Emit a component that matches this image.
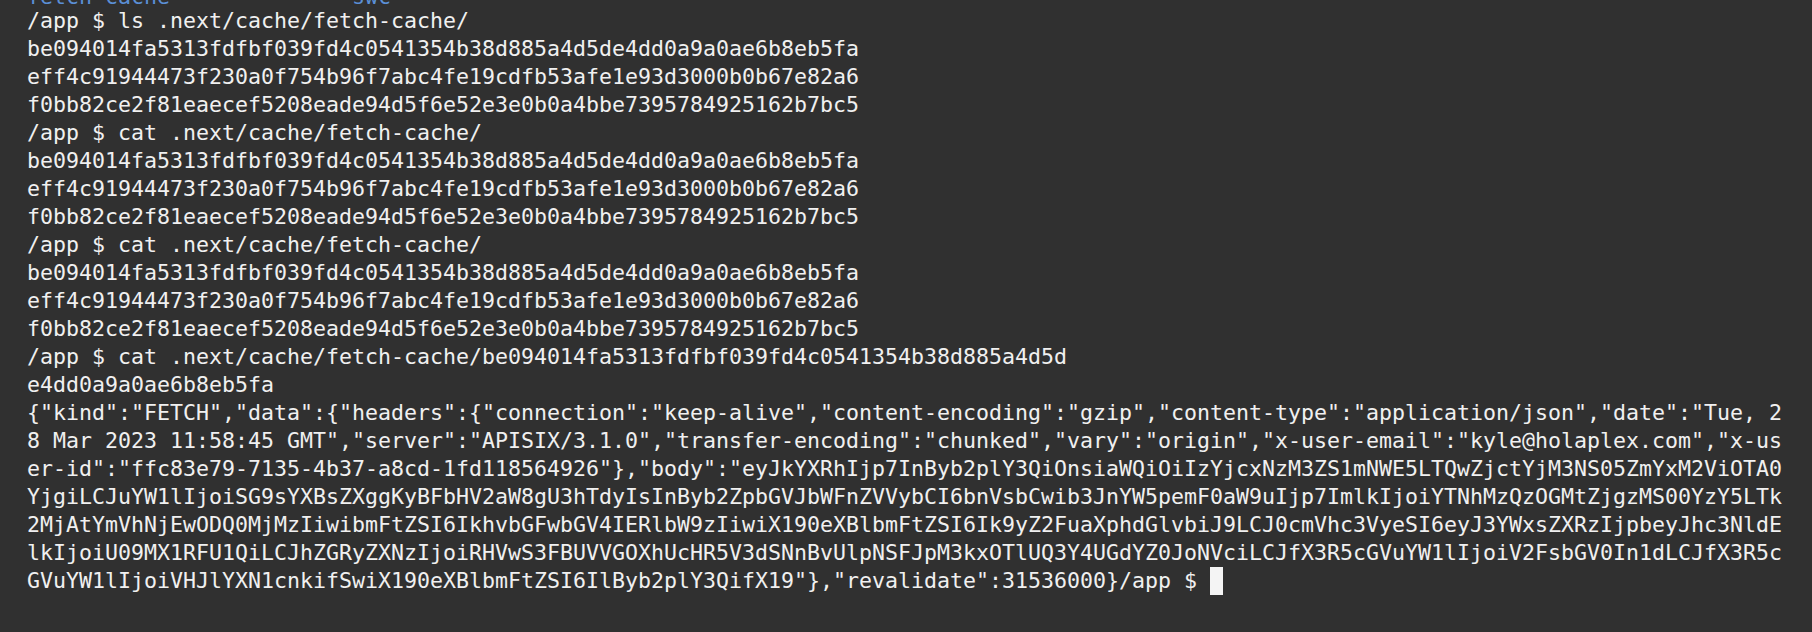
const hashes = [
  "be094014fa5313fdfbf039fd4c0541354b38d885a4d5de4dd0a9a0ae6b8eb5fa",
  "eff4c91944473f230a0f754b96f7abc4fe19cdfb53afe1e93d3000b0b67e82a6",
  "f0bb82ce2f81eaecef5208eade94d5f6e52e3e0b0a4bbe7395784925162b7bc5",
];

const lines: string[] = [
  "/app $ ls .next/cache/fetch-cache/",
  ...hashes,
  "/app $ cat .next/cache/fetch-cache/",
  ...hashes,
  "/app $ cat .next/cache/fetch-cache/",
  ...hashes,
  "/app $ cat .next/cache/fetch-cache/be094014fa5313fdfbf039fd4c0541354b38d885a4d5d",
  "e4dd0a9a0ae6b8eb5fa",
  '{"kind":"FETCH","data":{"headers":{"connection":"keep-alive","content-encoding":"gzip","content-type":"application/json","date":"Tue, 2',
  '8 Mar 2023 11:58:45 GMT","server":"APISIX/3.1.0","transfer-encoding":"chunked","vary":"origin","x-user-email":"kyle@holaplex.com","x-us',
  'er-id":"ffc83e79-7135-4b37-a8cd-1fd118564926"},"body":"eyJkYXRhIjp7InByb2plY3QiOnsiaWQiOiIzYjcxNzM3ZS1mNWE5LTQwZjctYjM3NS05ZmYxM2ViOTA0',
  "YjgiLCJuYW1lIjoiSG9sYXBsZXggKyBFbHV2aW8gU3hTdyIsInByb2ZpbGVJbWFnZVVybCI6bnVsbCwib3JnYW5pemF0aW9uIjp7ImlkIjoiYTNhMzQzOGMtZjgzMS00YzY5LTk",
  "2MjAtYmVhNjEwODQ0MjMzIiwibmFtZSI6IkhvbGFwbGV4IERlbW9zIiwiX190eXBlbmFtZSI6Ik9yZ2FuaXphdGlvbiJ9LCJ0cmVhc3VyeSI6eyJ3YWxsZXRzIjpbeyJhc3NldE",
  "lkIjoiU09MX1RFU1QiLCJhZGRyZXNzIjoiRHVwS3FBUVVGOXhUcHR5V3dSNnBvUlpNSFJpM3kxOTlUQ3Y4UGdYZ0JoNVciLCJfX3R5cGVuYW1lIjoiV2FsbGV0In1dLCJfX3R5c",
];

const lastLine =
  'GVuYW1lIjoiVHJlYXN1cnkifSwiX190eXBlbmFtZSI6IlByb2plY3QifX19"},"revalidate":31536000}/app $ ';

export default function App() {
  return (
    <div
      className="w-[1812px] h-[632px] overflow-hidden bg-[#303030] text-[#f0f0f0] pl-[27px] text-[21.6px] leading-[28px]"
      style={{ fontFamily: '"DejaVu Sans Mono", "Liberation Mono", monospace' }}
    >
      {/* ls output scrolled off the top, only its lower edge shows */}
      <div className="-mt-[17px] h-[24px] whitespace-pre text-[#5b8fd6]">
        {"fetch-cache              swc"}
      </div>

      {lines.map((line, i) => (
        <div key={i} className="h-[28px] whitespace-pre">
          {line}
        </div>
      ))}

      <div className="h-[28px] whitespace-pre">
        {lastLine}
        <span className="inline-block w-[13px] h-[28px] bg-[#f4f4f4] align-top" />
      </div>
    </div>
  );
}
